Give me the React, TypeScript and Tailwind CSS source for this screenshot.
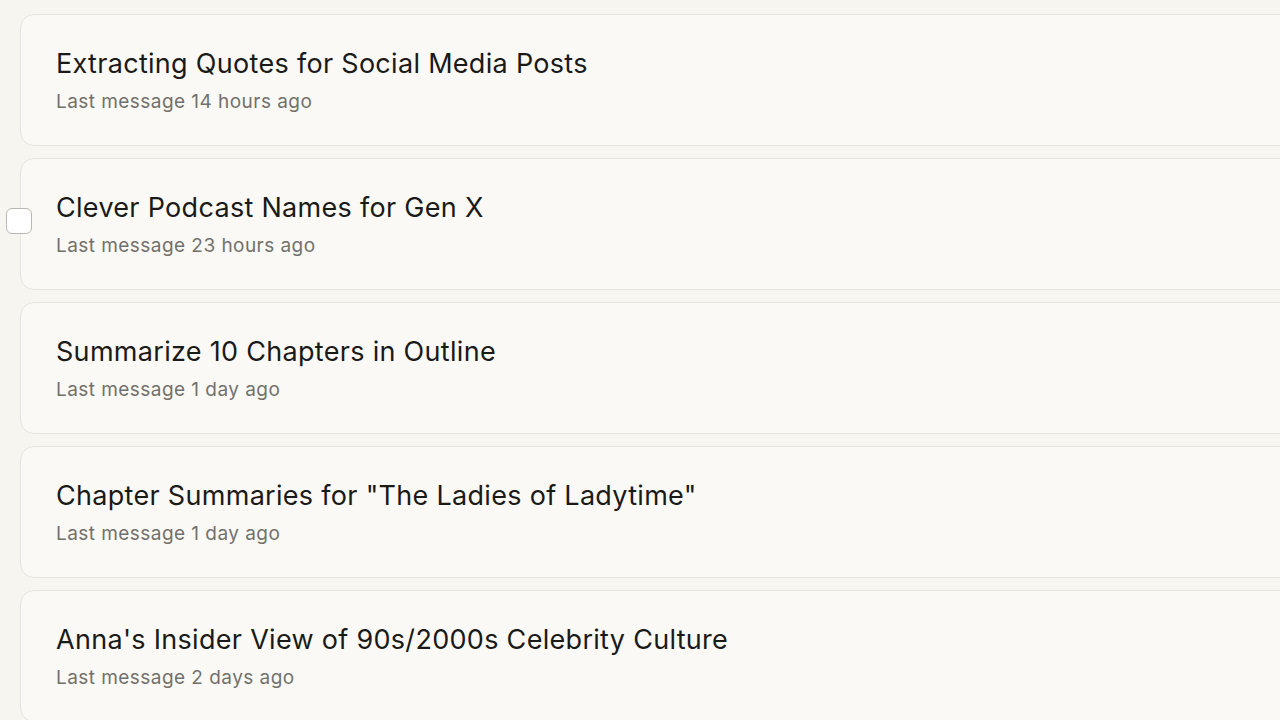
import React from "react";

const items = [
  { title: "Extracting Quotes for Social Media Posts", time: "Last message 14 hours ago" },
  { title: "Clever Podcast Names for Gen X", time: "Last message 23 hours ago", check: true },
  { title: "Summarize 10 Chapters in Outline", time: "Last message 1 day ago" },
  { title: 'Chapter Summaries for "The Ladies of Ladytime"', time: "Last message 1 day ago" },
  { title: "Anna's Insider View of 90s/2000s Celebrity Culture", time: "Last message 2 days ago" },
];

export default function App() {
  return (
    <div
      className="w-[1280px] h-[720px] overflow-hidden bg-[#f6f5f0] pl-[20px] pt-[14px]"
      style={{ fontFamily: "Inter, 'Noto Sans', sans-serif" }}
    >
      <div className="flex flex-col gap-[12px] mr-[-40px]">
        {items.map((it) => (
          <div
            key={it.title}
            className="relative h-[132px] shrink-0 rounded-[14px] border border-[#e6e4dd] bg-[#faf9f6] pl-[35px] pt-[31px]"
          >
            {it.check && (
              <div className="absolute left-[-15px] top-[49px] h-[26px] w-[26px] rounded-[6px] border-[1.5px] border-[#b9b7b1] bg-white" />
            )}
            <div className="text-[27px] leading-[36px] text-[#1a1a18] tracking-[0.3px]">{it.title}</div>
            <div className="mt-[5px] text-[19px] leading-[30px] text-[#72716b] tracking-[0.45px]">{it.time}</div>
          </div>
        ))}
      </div>
    </div>
  );
}
